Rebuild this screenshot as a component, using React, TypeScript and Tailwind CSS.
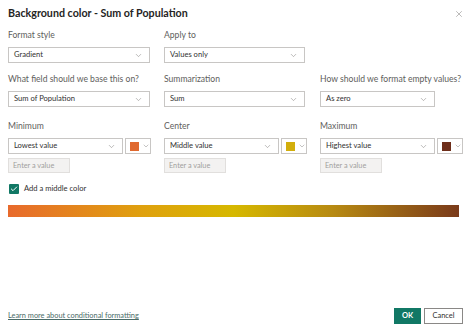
import { ChevronDown, X, Check } from 'lucide-react';

const font = { fontFamily: 'Lato, "Open Sans", sans-serif' };

function Dropdown({ value, width }: { value: string; width: string }) {
  return (
    <div
      className={`${width} h-[16px] border border-[#c8c6c4] bg-white flex items-center justify-between pl-[5px] pr-[6px] shrink-0`}
    >
      <span className="text-[7.6px] text-[#323130] leading-none whitespace-nowrap">{value}</span>
      <ChevronDown size={9} strokeWidth={1.5} className="text-[#8a8886]" />
    </div>
  );
}

function Swatch({ color }: { color: string }) {
  return (
    <div className="w-[26px] h-[16px] border border-[#c8c6c4] bg-white flex items-center pl-[4px] gap-[3px] shrink-0">
      <div className="w-[9px] h-[9px]" style={{ backgroundColor: color }} />
      <ChevronDown size={8} strokeWidth={1.5} className="text-[#8a8886]" />
    </div>
  );
}

function ValueInput() {
  return (
    <div className="w-[62px] h-[15px] mt-[4px] border border-[#e1dfdd] bg-[#f3f2f1] flex items-center pl-[4px]">
      <span className="text-[7.3px] text-[#a19f9d] leading-none whitespace-nowrap">Enter a value</span>
    </div>
  );
}

function Label({ children }: { children: React.ReactNode }) {
  return (
    <div className="h-[16px] text-[8.6px] text-[#605e5c] leading-[8px] whitespace-nowrap">{children}</div>
  );
}

function Stop({ label, value, color, width }: { label: string; value: string; color: string; width: string }) {
  return (
    <div className={`${width} shrink-0`}>
      <Label>{label}</Label>
      <div className="flex gap-[2px]">
        <Dropdown value={value} width="w-[115px]" />
        <Swatch color={color} />
      </div>
      <ValueInput />
    </div>
  );
}

export default function App() {
  return (
    <div className="w-[474px] h-[332px] bg-white flex flex-col px-[8px] overflow-hidden" style={font}>
      <div className="flex items-center justify-between h-[31px] pb-[4px]">
        <h1 className="text-[10.7px] font-bold text-[#252423]">Background color - Sum of Population</h1>
        <X size={10} strokeWidth={1.2} className="text-[#797775] mr-[2px]" />
      </div>

      <div className="flex">
        <div className="w-[156px] shrink-0">
          <Label>Format style</Label>
          <Dropdown value="Gradient" width="w-[142px]" />
        </div>
        <div className="w-[156px] shrink-0">
          <Label>Apply to</Label>
          <Dropdown value="Values only" width="w-[141px]" />
        </div>
      </div>

      <div className="flex mt-[12px]">
        <div className="w-[156px] shrink-0">
          <Label>What field should we base this on?</Label>
          <Dropdown value="Sum of Population" width="w-[142px]" />
        </div>
        <div className="w-[156px] shrink-0">
          <Label>Summarization</Label>
          <Dropdown value="Sum" width="w-[141px]" />
        </div>
        <div className="w-[146px] shrink-0">
          <Label>How should we format empty values?</Label>
          <Dropdown value="As zero" width="w-[115px]" />
        </div>
      </div>

      <div className="flex mt-[15px]">
        <Stop label="Minimum" value="Lowest value" color="#e0692f" width="w-[156px]" />
        <Stop label="Center" value="Middle value" color="#d2ae0c" width="w-[156px]" />
        <Stop label="Maximum" value="Highest value" color="#6e2e1a" width="w-[146px]" />
      </div>

      <div className="flex items-center gap-[5px] mt-[11px] pl-[1px]">
        <div className="w-[10px] h-[10px] rounded-[1px] bg-[#117865] flex items-center justify-center">
          <Check size={8} strokeWidth={3} className="text-white" />
        </div>
        <span className="text-[7.6px] text-[#323130] leading-none">Add a middle color</span>
      </div>

      <div className="w-[451px] h-[12px] mt-[11px] bg-[linear-gradient(to_right,#e86a2c,#dfa10e_30%,#d6b800_50%,#b78a12_72%,#7a3a1a)]" />

      <div className="flex-1" />

      <div className="flex items-center justify-between h-[16px] mb-[8px]">
        <a className="text-[7.4px] text-[#4a6b68] underline leading-none">Learn more about conditional formatting</a>
        <div className="flex gap-[3px] mr-[3px]">
          <button className="w-[27px] h-[16px] bg-[#117865] text-white text-[7.5px] font-bold leading-none">OK</button>
          <button className="w-[39px] h-[16px] border border-[#8a8886] bg-white text-[#323130] text-[7.5px] leading-none">Cancel</button>
        </div>
      </div>
    </div>
  );
}
